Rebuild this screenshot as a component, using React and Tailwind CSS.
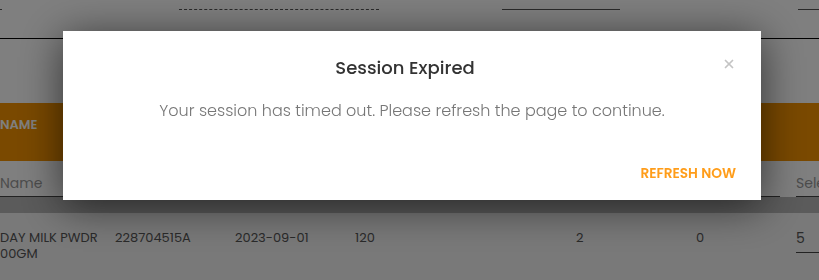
import { X } from "lucide-react";

const cols = [
  { w: "w-[115px]" },
  { w: "w-[120px]" },
  { w: "w-[120px]" },
  { w: "w-[221px]" },
  { w: "w-[120px]" },
  { w: "w-[100px]" },
  { w: "w-[100px]" },
];

const row = ["DAY MILK PWDR\n00GM", "228704515A", "2023-09-01", "120", "2", "0"];

function PageBehind() {
  return (
    <div className="w-[819px] h-[280px] overflow-hidden bg-white text-[#333]">
      {/* toolbar fields, scrolled up */}
      <div className="relative h-[39px] border-b border-black">
        <div className="absolute left-0 top-[9px] w-[2px] border-t border-[#555]" />
        <div className="absolute left-[179px] top-[9px] w-[200px] border-t border-dashed border-[#555]" />
        <div className="absolute left-[502px] top-[9px] w-[118px] border-t border-[#555]" />
        <div className="absolute left-[798px] top-[9px] w-[30px] border-t border-[#555]" />
      </div>

      <div className="mt-[64px]">
        {/* header */}
        <div className="flex h-[58px] bg-[#f59300] text-white text-[13px] font-semibold items-start pt-[12px]">
          <div className="w-[776px]">NAME</div>
          <div className="w-[100px]">GST</div>
        </div>

        {/* filters */}
        <div className="flex h-[36px] items-end">
          {cols.map((c, i) => (
            <div key={i} className={`${c.w} shrink-0 pr-[16px]`}>
              <div className="border-b border-[#444] h-[27px] text-[14px] text-[#999] leading-[26px] whitespace-nowrap overflow-hidden">
                {i === 0 ? "Name" : i === 6 ? "Sele" : ""}
              </div>
            </div>
          ))}
        </div>
        <div className="h-[16px] bg-[#b6b6b6]" />

        {/* data row */}
        <div className="flex bg-[#f2f2f2] h-[80px] pt-[17px] text-[13px] leading-[16px] text-[#555]">
          {row.map((t, i) => (
            <div key={i} className={`${cols[i].w} shrink-0 whitespace-pre-line`}>
              {t}
            </div>
          ))}
          <div className="w-[100px] shrink-0">
            <div className="border-b border-[#444] h-[23px] text-[14px]">5</div>
          </div>
        </div>
      </div>
    </div>
  );
}

export default function App() {
  return (
    <div className="relative w-[819px] h-[280px] overflow-hidden font-['Poppins','Inter',sans-serif]">
      <PageBehind />
      <div className="fixed inset-0 bg-black/50">
        <div className="relative ml-[63px] mt-[31px] w-[698px] h-[169px] bg-white shadow-[0_6px_40px_rgba(0,0,0,0.6)] flex flex-col items-center pt-[25px] pr-[25px] pl-[25px]">
          <button className="absolute right-[25px] top-[26px] text-[#c4c4c4]">
            <X size={14} strokeWidth={3} />
          </button>
          <h2 className="mr-[14px] text-[18px] leading-[24px] font-medium text-[#333]">Session Expired</h2>
          <p className="mt-[19px] text-[16px] leading-[24px] font-light text-[#777]">
            Your session has timed out. Please refresh the page to continue.
          </p>
          <div className="self-stretch flex justify-end mt-[41px]">
            <button className="text-[13.7px] leading-[20px] font-semibold text-[#ff9d1a]">REFRESH NOW</button>
          </div>
        </div>
      </div>
    </div>
  );
}
